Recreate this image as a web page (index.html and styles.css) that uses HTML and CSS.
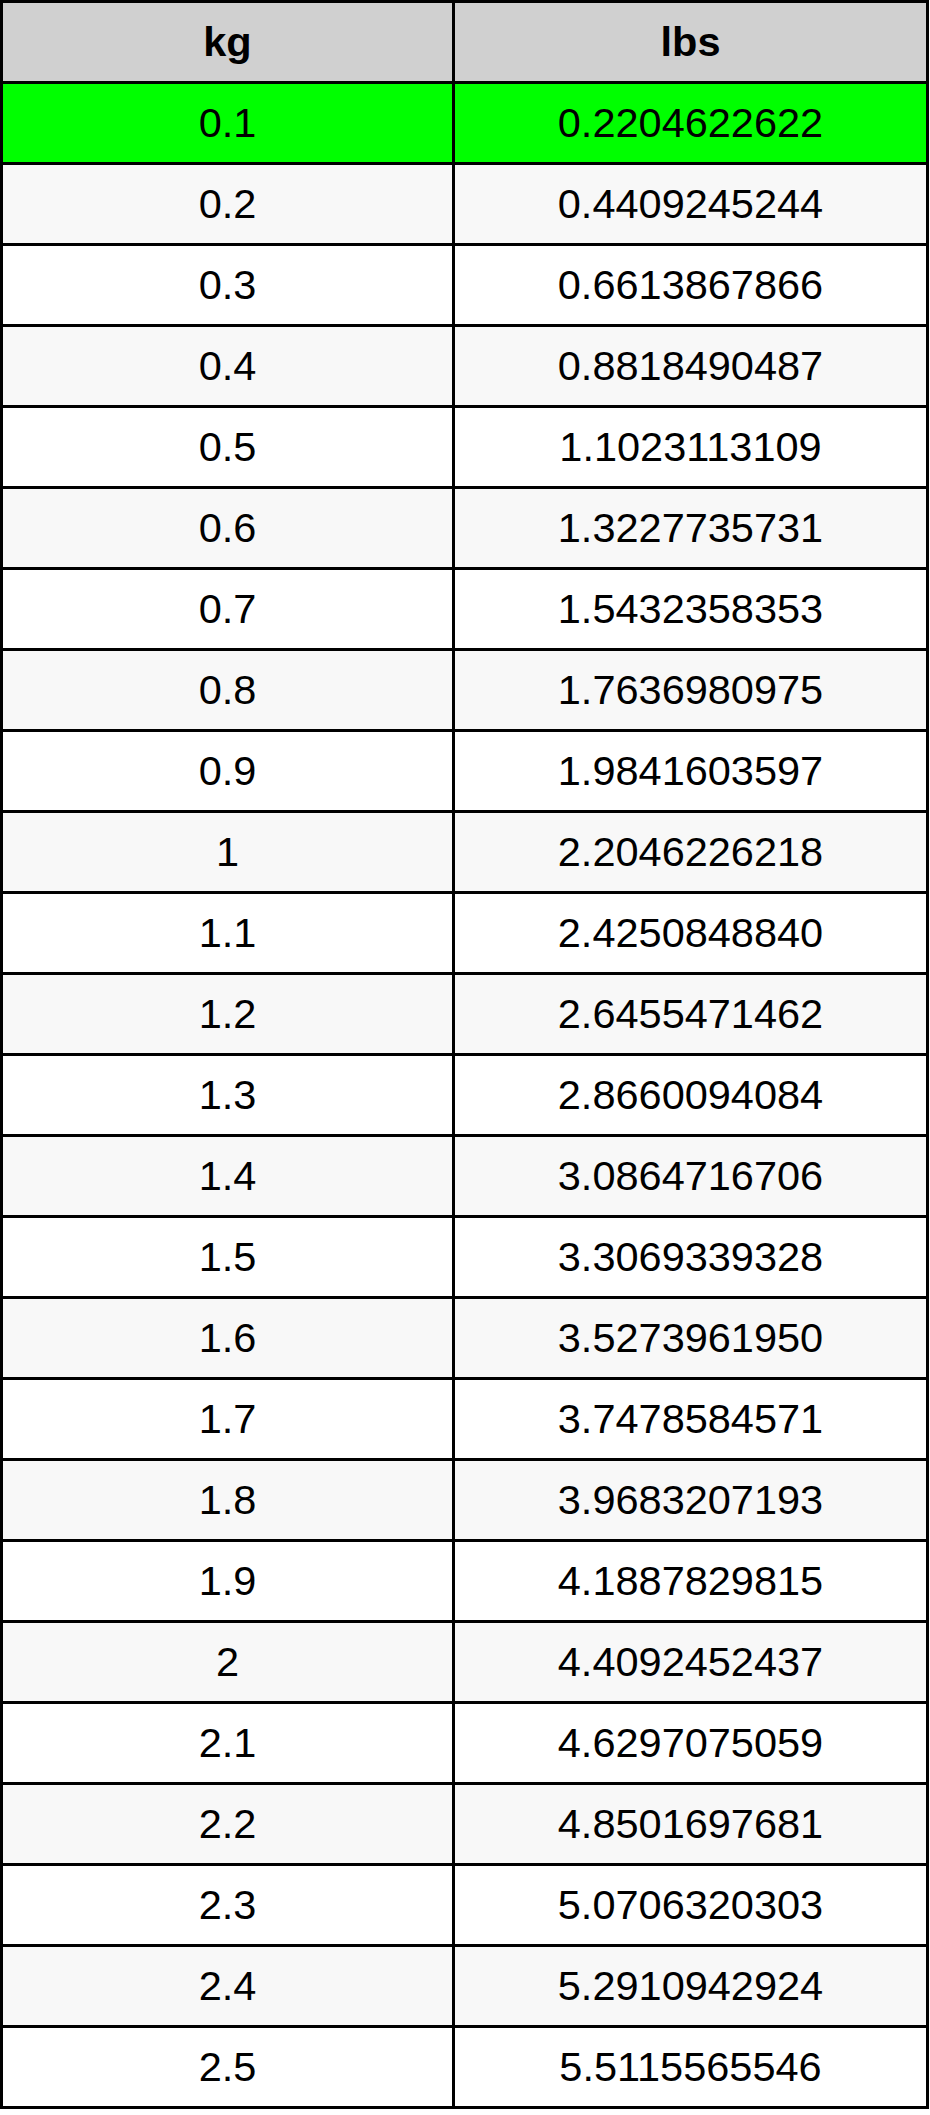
FILE: index.html
```html
<!DOCTYPE html>
<html lang="en">
<head>
<meta charset="utf-8">
<title>kg to lbs</title>
<link rel="stylesheet" href="styles.css">
</head>
<body>
<table class="conv">
<thead>
<tr><th class="c1">kg</th><th class="c2">lbs</th></tr>
</thead>
<tbody>
<tr class="hl"><td>0.1</td><td>0.2204622622</td></tr>
<tr class="alt"><td>0.2</td><td>0.4409245244</td></tr>
<tr><td>0.3</td><td>0.6613867866</td></tr>
<tr class="alt"><td>0.4</td><td>0.8818490487</td></tr>
<tr><td>0.5</td><td>1.1023113109</td></tr>
<tr class="alt"><td>0.6</td><td>1.3227735731</td></tr>
<tr><td>0.7</td><td>1.5432358353</td></tr>
<tr class="alt"><td>0.8</td><td>1.7636980975</td></tr>
<tr><td>0.9</td><td>1.9841603597</td></tr>
<tr class="alt"><td>1</td><td>2.2046226218</td></tr>
<tr><td>1.1</td><td>2.4250848840</td></tr>
<tr class="alt"><td>1.2</td><td>2.6455471462</td></tr>
<tr><td>1.3</td><td>2.8660094084</td></tr>
<tr class="alt"><td>1.4</td><td>3.0864716706</td></tr>
<tr><td>1.5</td><td>3.3069339328</td></tr>
<tr class="alt"><td>1.6</td><td>3.5273961950</td></tr>
<tr><td>1.7</td><td>3.7478584571</td></tr>
<tr class="alt"><td>1.8</td><td>3.9683207193</td></tr>
<tr><td>1.9</td><td>4.1887829815</td></tr>
<tr class="alt"><td>2</td><td>4.4092452437</td></tr>
<tr><td>2.1</td><td>4.6297075059</td></tr>
<tr class="alt"><td>2.2</td><td>4.8501697681</td></tr>
<tr><td>2.3</td><td>5.0706320303</td></tr>
<tr class="alt"><td>2.4</td><td>5.2910942924</td></tr>
<tr><td>2.5</td><td>5.5115565546</td></tr>
</tbody>
</table>
</body>
</html>
```
FILE: styles.css
```css
html, body {
  margin: 0;
  padding: 0;
  background: #ffffff;
}

.conv {
  border-collapse: separate;
  border-spacing: 3px;
  background: #000000;
  font-family: "Liberation Sans", Arial, sans-serif;
  font-size: 41.5px;
  color: #000000;
  table-layout: fixed;
}

.conv th,
.conv td {
  padding: 0;
  height: 78px;
  text-align: center;
  vertical-align: middle;
  line-height: 1;
  background: #ffffff;
}

.conv th {
  font-weight: bold;
  background: #d0d0d0;
}

.conv .c1 { width: 449px; }
.conv .c2 { width: 471px; }

.conv tr.alt td { background: #f8f8f8; }
.conv tr.hl td { background: #00ff00; }
```
